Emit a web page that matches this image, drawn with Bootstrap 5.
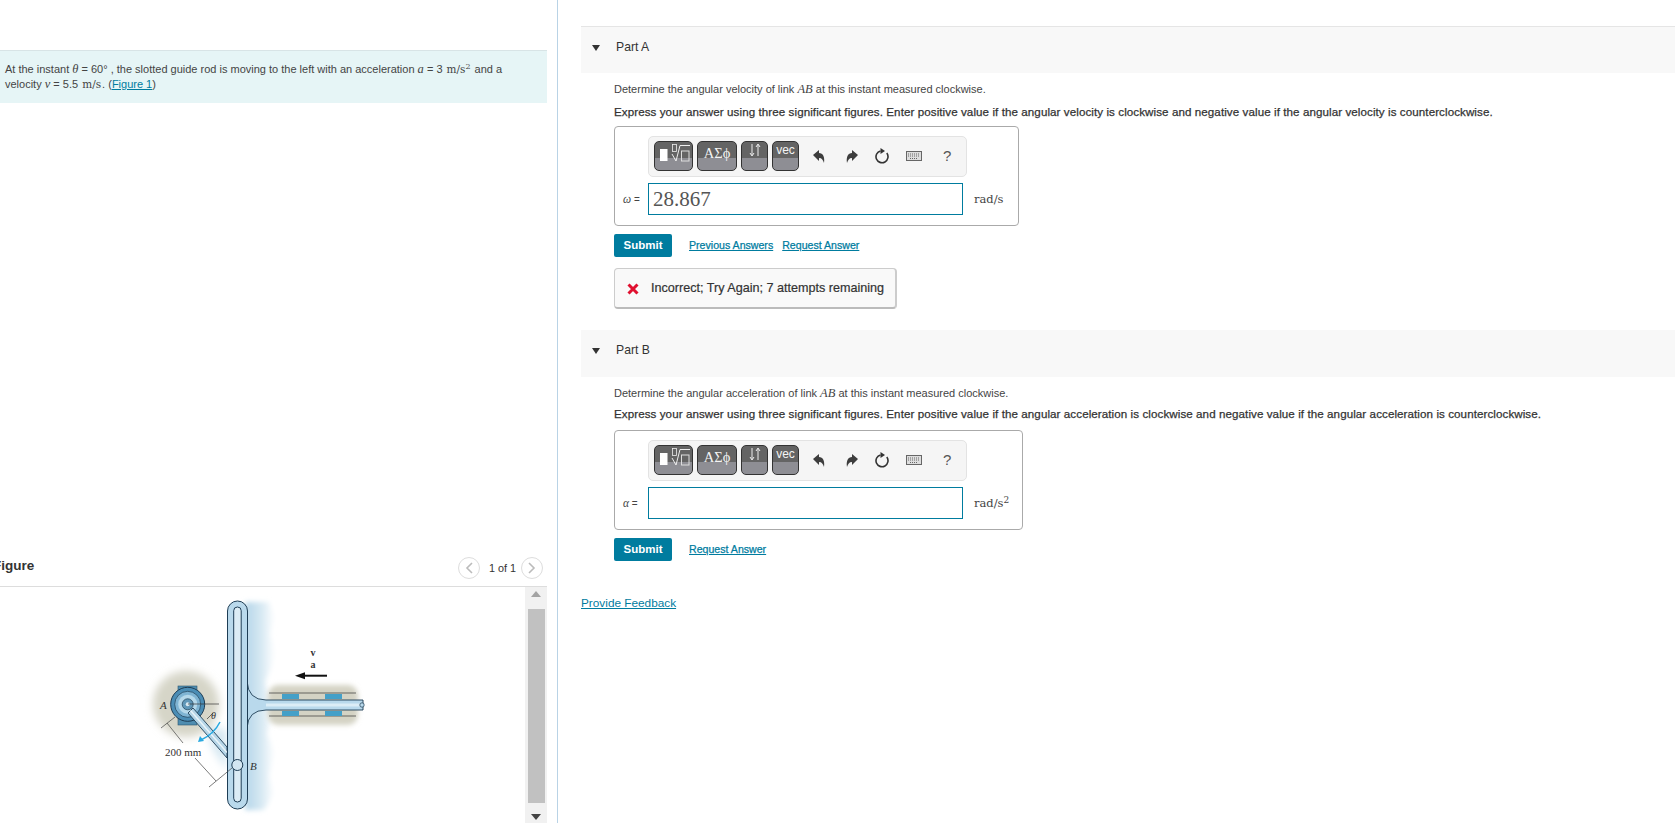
<!DOCTYPE html>
<html lang="en"><head><meta charset="utf-8"><title>Part A</title>
<link href="https://cdn.jsdelivr.net/npm/bootstrap@5.3.0/dist/css/bootstrap.min.css" rel="stylesheet">
<style>
html,body{height:823px;overflow:hidden;background:#fff}
body{font:12px/1.3 "Liberation Sans",Arial,sans-serif;color:#333}
.shell{height:823px;overflow:hidden}
.leftpane{width:558px;flex:none;border-right:1px solid #b9d3e6;overflow:hidden}
.intro{width:547px;margin-top:50px;height:53px;background:#e6f5f6;border-top:1px solid #d8e4e6;padding:11px 5px 0;line-height:15px;font-size:11px;color:#444;white-space:nowrap}
.mvar{font-family:"Liberation Serif",serif;font-style:italic;font-size:12.5px}
.munit{font-family:"DejaVu Serif",serif;font-size:10.5px;margin:0 1px}
.mnum{font-size:8px;vertical-align:4px;line-height:0}
.unit .mnum{font-size:9px}
a.plink{color:#007c9f;text-decoration:underline}
.fighead{width:547px;margin-top:450px;height:34px;border-bottom:1px solid #ddd;align-items:flex-start}
.figttl{font-weight:700;font-size:13.500px;color:#333;margin-left:-7px;line-height:26px}
.pager{gap:9px;padding-right:4px;height:24px;margin-top:3px;font-size:10.8px;color:#333}
.pgcirc{width:22px;height:22px;border:1px solid #ddd;border-radius:50%;display:flex;align-items:center;justify-content:center}
.pgnext{margin-left:-4px}
.figwrap{width:547px;height:237px}
.figsvg{width:525px;height:237px;display:block;flex:none}
.scrolltrack{width:22px;height:237px;flex:none;background:#f1f1f1;align-items:center;justify-content:space-between;padding:4px 0}
.scrollthumb{width:17px;height:194px;background:#c1c1c1}
.rightpane{min-width:0;padding:0 0 0 23px;flex:1}
.parthead{height:47px;background:#f8f8f8;border-top:1px solid #e5e5e5;padding:0 0 5px 11px;gap:16px;font-size:12.2px;color:#333}
.parthead.pb{border-top:0;margin-top:21px}
.pa-head{margin-top:26px}
.partbody{padding-left:33px}
.qline{font-size:11px;color:#444;height:20px;line-height:20px;white-space:nowrap}
.qline.first{margin-top:5px;height:22px;line-height:22px}
.qline.strong{margin-top:2px;color:#333;-webkit-text-stroke:.25px #333;font-size:11.6px;letter-spacing:.08px}
.partb .qline.first{margin-top:6px;height:21px;line-height:21px}
.partb .qline.strong{margin-top:0}
.ansbox{border:1px solid #aaa;border-radius:4px;height:100px;width:405px;margin-top:4px;padding:9px 0 0 33px}
.partb .ansbox{width:409px;margin-top:6px}
.tools{width:319px;height:41px;background:#f5f5f5;border:1px solid #e3e3e3;border-radius:5px;padding:4px 5px;gap:4px;align-items:flex-start}
.tb{height:30px;border:1px solid #333;border-radius:5px;background:linear-gradient(#646464 0,#646464 58%,#8e8e94 58%,#8e8e94 100%);color:#f4f4f4;display:flex;justify-content:center;font-size:12px;line-height:15px;overflow:hidden;padding-top:1px}
.tb1{width:39px;justify-content:flex-start;padding:0}.tb2{width:40px;font:14.500px "Liberation Serif",serif;line-height:22px;padding:0}.tb3{width:27px}.tb4{width:27px}
.toolicons{align-items:center;height:30px;gap:17px;margin-left:10px}
.qm{font-size:15px;color:#555}
.ansrow{margin-top:6px;margin-left:-25px;align-items:center}
.lhs{width:25px;font-size:10px;color:#444;white-space:nowrap}
.lhs i{font-family:"Liberation Serif",serif;font-size:11.5px}
.fieldbox{width:315px;height:32px;border:1px solid #007c9f;font:21px/30px "Liberation Serif",serif;color:#555;padding-left:4px;flex:none}
.unit{font:11.500px "DejaVu Serif",serif;margin-left:11px;color:#444;white-space:nowrap}
.btnsub{width:58px;height:23px;background:#007c9f;color:#fff;font-size:11.5px;font-weight:700;border:0;border-radius:2px;padding:0;line-height:23px}
.btnline{margin-top:8px;align-items:center;gap:17px;font-size:10.6px}
.btnline .gaps{gap:9px;-webkit-text-stroke:.25px #007c9f}
.feedbk{width:283px;height:41px;margin-top:11px;padding-top:1px;background:#f9f9f9;border:1px solid #ccc;border-bottom:2px solid #bbb;border-right:2px solid #ccc;border-radius:4px;padding-left:12px;gap:12px;font-size:12.6px;color:#333;-webkit-text-stroke:.2px #333}
.provide{display:block;margin-top:34px;font-size:11.8px;line-height:16px;width:fit-content}
</style></head><body>
<div class="shell d-flex">
<div class="leftpane">
 <div class="intro">At the instant <span class="mvar">θ</span> = 60° , the slotted guide rod is moving to the left with an acceleration <span class="mvar">a</span> = 3 <span class="munit">m/s<span class="mnum">2</span></span> and a<br>velocity <span class="mvar">v</span> = 5.5 <span class="munit">m/s</span>. (<a class="plink" href="#">Figure 1</a>)</div>
 <div class="fighead d-flex justify-content-between">
  <div class="figttl">Figure</div>
  <div class="pager d-flex align-items-center">
   <span class="pgcirc"><svg width="8" height="12" viewBox="0 0 8 12"><path d="M7 1 2 6l5 5" fill="none" stroke="#bbb" stroke-width="1.6"/></svg></span>
   <span>1 of 1</span>
   <span class="pgcirc pgnext"><svg width="8" height="12" viewBox="0 0 8 12"><path d="M1 1l5 5-5 5" fill="none" stroke="#bbb" stroke-width="1.6"/></svg></span>
  </div>
 </div>
 <div class="figwrap d-flex">
  <svg class="figsvg" viewBox="0 587 525 237" xmlns="http://www.w3.org/2000/svg">
   <defs>
    <filter id="soft" x="-30%" y="-30%" width="160%" height="160%"><feGaussianBlur stdDeviation="4"/></filter>
    <filter id="softer" x="-20%" y="-40%" width="140%" height="180%"><feGaussianBlur stdDeviation="2.500"/></filter>
    <linearGradient id="fade" x1="0" x2="1"><stop offset="0" stop-color="#b5d6ea"/><stop offset=".5" stop-color="#d4e7f2"/><stop offset="1" stop-color="#fff"/></linearGradient>
   </defs>
   <path d="M245 602h24l5 15-4 17 5 18-4 16-6 14 8 30-6 22 7 18-5 24 4 17-6 13-4 4h-18z" fill="url(#fade)" filter="url(#softer)"/>
   <path d="M205 725l22 5v40l-14-20z" fill="#d6e8f2" filter="url(#soft)"/>
   <ellipse cx="186" cy="704" rx="33" ry="33" fill="#d6d5c8" filter="url(#soft)"/>
   <rect x="268" y="685" width="90" height="40" rx="10" fill="#d4d3c4" filter="url(#softer)"/>
   <rect x="178" y="686" width="19" height="39" fill="#4f8db0" stroke="#2b566f" stroke-width=".6"/>
   <circle cx="187.700" cy="704.300" r="17" fill="#4b8db5" stroke="#1e3d55"/>
   <circle cx="187.700" cy="704.300" r="13" fill="#7fb4d3" stroke="#1e3d55" stroke-width=".7"/>
   <circle cx="187.700" cy="704.300" r="9.500" fill="#b5d8ea"/>
   <circle cx="187.700" cy="704.300" r="5.500" fill="#5f97b8" stroke="#1e3d55" stroke-width=".7"/>
   <circle cx="187.700" cy="704.300" r="2" fill="#d7e8f1"/>
   <path d="M193 708l34 39v11l-39-45z" fill="#b6d6e8" stroke="#1e3d55" stroke-width=".9"/>
   <path d="M190.500 710.500l36.500 42" stroke="#eaf4f9" stroke-width="1.500"/>
   <path d="M188 704h31M207 719l6-6" stroke="#333" stroke-width=".7"/>
   <path d="M247 681q1 19 19 19h97v10H266q-18 0-19 18z" fill="#b9d9ec" stroke="#1e3d55" stroke-width=".9"/>
   <path d="M266 705h96" stroke="#dcedf6" stroke-width="3"/>
   <circle cx="362" cy="705" r="2.200" fill="#b9d9ec" stroke="#1e3d55" stroke-width=".7"/>
   <path d="M269 693h87M269 716h87" stroke="#333" stroke-width=".7"/>
   <rect x="282" y="694" width="17" height="5" fill="#44a0c8"/><rect x="325" y="694" width="17" height="5" fill="#44a0c8"/><rect x="282" y="711" width="17" height="5" fill="#44a0c8"/><rect x="325" y="711" width="17" height="5" fill="#44a0c8"/>
   <rect x="227.500" y="601" width="20" height="208" rx="10" fill="#b9d9ec" stroke="#1e3d55"/>
   <rect x="233.700" y="607" width="7.500" height="195" rx="3.700" fill="#dcecf5" stroke="#1e3d55"/>
   <circle cx="237.300" cy="765" r="5.500" fill="#d3e6f1" stroke="#1e3d55"/>
   <path d="M327 675.700h-24" stroke="#111" stroke-width="2"/><path d="M295 675.700l10-3.500v7z" fill="#111"/>
   <path d="M220 722q-6 12-19 18" fill="none" stroke="#29a9e0" stroke-width="1.500"/><path d="M198 742l2-6 4 5z" fill="#29a9e0"/>
   <path d="M161 728l14-11M167 723l16 20M195 758l21 23M209 787l23-19" stroke="#444" stroke-width=".7" fill="none"/>
   <text x="313" y="656" font-family="Liberation Serif" font-weight="700" font-size="10" text-anchor="middle" fill="#333">v</text>
   <text x="313" y="668" font-family="Liberation Serif" font-weight="700" font-size="10" text-anchor="middle" fill="#333">a</text>
   <text x="160" y="709" font-family="Liberation Serif" font-style="italic" font-size="11" fill="#333">A</text>
   <text x="211" y="719" font-family="Liberation Serif" font-style="italic" font-size="10" fill="#333">θ</text>
   <text x="165" y="756" font-family="Liberation Serif" font-size="11" fill="#333">200 mm</text>
   <text x="250" y="770" font-family="Liberation Serif" font-style="italic" font-size="11" fill="#333">B</text>
  </svg>
  <div class="scrolltrack d-flex flex-column">
   <svg width="10" height="6" viewBox="0 0 10 6"><path d="M5 0l5 6H0z" fill="#a3a3a3"/></svg>
   <div class="scrollthumb"></div>
   <svg width="10" height="6" viewBox="0 0 10 6"><path d="M0 0h10L5 6z" fill="#444"/></svg>
  </div>
 </div>
</div>
<div class="rightpane">
 <div class="parthead pa-head d-flex align-items-center"><svg width="8" height="6" viewBox="0 0 8 6"><path d="M0 0h8L4 6z" fill="#333"/></svg><span>Part A</span></div>
 <div class="partbody">
  <div class="qline first">Determine the angular velocity of link <span class="mvar">AB</span> at this instant measured clockwise.</div>
  <div class="qline strong">Express your answer using three significant figures. Enter positive value if the angular velocity is clockwise and negative value if the angular velocity is counterclockwise.</div>
  <div class="ansbox">
   <div class="tools d-flex">
    <div class="tb tb1"><svg width="37" height="28" viewBox="0 0 37 28"><rect x="5" y="7" width="7.500" height="12" fill="#fff"/><path d="M17 12l4 7 4-15.500h10" fill="none" stroke="#eee"/><rect x="17.500" y="2.500" width="4" height="7" fill="none" stroke="#eee" stroke-width=".8"/><rect x="26.500" y="9" width="7.500" height="10" fill="none" stroke="#ddd"/></svg></div>
    <div class="tb tb2">ΑΣϕ</div>
    <div class="tb tb3"><svg width="14" height="16" viewBox="0 0 14 16"><path d="M4 1v11M2 10l2 3 2-3M10 13V2M8 4l2-3 2 3" fill="none" stroke="#eee"/></svg></div>
    <div class="tb tb4">vec</div>
    <div class="toolicons d-flex">
     <svg width="12" height="13" viewBox="0 0 12 13"><path d="M0 5 6 0v3c4 0 6 4 5 10-1-3-2-5-5-5v3z" fill="#3d3d3d"/></svg>
     <svg class="ms-1" width="12" height="13" viewBox="0 0 12 13"><path d="M12 5 6 0v3c-4 0-6 4-5 10 1-3 2-5 5-5v3z" fill="#3d3d3d"/></svg>
     <svg width="14" height="16" viewBox="0 0 14 16"><path d="M11.800 5.100A6 6 0 1 1 5.500 2.900" fill="none" stroke="#333" stroke-width="1.600"/><path d="M5.500 0v6L10 3z" fill="#333"/></svg>
     <svg width="16" height="10" viewBox="0 0 16 10"><rect x=".5" y=".5" width="15" height="9" fill="#ddd" stroke="#666"/><path d="M2 3h12M2 5h12M4 7.500h8" stroke="#666" stroke-dasharray="1 1"/></svg>
     <span class="qm ms-1">?</span>
    </div>
   </div>
   <div class="ansrow d-flex"><span class="lhs"><i>ω</i> =</span><div class="fieldbox">28.867</div><span class="unit">rad/s</span></div>
  </div>
  <div class="btnline d-flex"><button class="btnsub">Submit</button><div class="gaps d-flex"><a class="plink" href="#">Previous Answers</a><a class="plink" href="#">Request Answer</a></div></div>
  <div class="feedbk d-flex align-items-center"><svg width="12" height="12" viewBox="0 0 12 12"><path d="M1.500 1.500l9 9M10.500 1.500l-9 9" stroke="#e0102f" stroke-width="3"/></svg><span>Incorrect; Try Again; 7 attempts remaining</span></div>
 </div>
 <div class="parthead pb d-flex align-items-center"><svg width="8" height="6" viewBox="0 0 8 6"><path d="M0 0h8L4 6z" fill="#333"/></svg><span>Part B</span></div>
 <div class="partbody partb">
  <div class="qline first">Determine the angular acceleration of link <span class="mvar">AB</span> at this instant measured clockwise.</div>
  <div class="qline strong">Express your answer using three significant figures. Enter positive value if the angular acceleration is clockwise and negative value if the angular acceleration is counterclockwise.</div>
  <div class="ansbox">
   <div class="tools d-flex">
    <div class="tb tb1"><svg width="37" height="28" viewBox="0 0 37 28"><rect x="5" y="7" width="7.500" height="12" fill="#fff"/><path d="M17 12l4 7 4-15.500h10" fill="none" stroke="#eee"/><rect x="17.500" y="2.500" width="4" height="7" fill="none" stroke="#eee" stroke-width=".8"/><rect x="26.500" y="9" width="7.500" height="10" fill="none" stroke="#ddd"/></svg></div>
    <div class="tb tb2">ΑΣϕ</div>
    <div class="tb tb3"><svg width="14" height="16" viewBox="0 0 14 16"><path d="M4 1v11M2 10l2 3 2-3M10 13V2M8 4l2-3 2 3" fill="none" stroke="#eee"/></svg></div>
    <div class="tb tb4">vec</div>
    <div class="toolicons d-flex">
     <svg width="12" height="13" viewBox="0 0 12 13"><path d="M0 5 6 0v3c4 0 6 4 5 10-1-3-2-5-5-5v3z" fill="#3d3d3d"/></svg>
     <svg class="ms-1" width="12" height="13" viewBox="0 0 12 13"><path d="M12 5 6 0v3c-4 0-6 4-5 10 1-3 2-5 5-5v3z" fill="#3d3d3d"/></svg>
     <svg width="14" height="16" viewBox="0 0 14 16"><path d="M11.800 5.100A6 6 0 1 1 5.500 2.900" fill="none" stroke="#333" stroke-width="1.600"/><path d="M5.500 0v6L10 3z" fill="#333"/></svg>
     <svg width="16" height="10" viewBox="0 0 16 10"><rect x=".5" y=".5" width="15" height="9" fill="#ddd" stroke="#666"/><path d="M2 3h12M2 5h12M4 7.500h8" stroke="#666" stroke-dasharray="1 1"/></svg>
     <span class="qm ms-1">?</span>
    </div>
   </div>
   <div class="ansrow d-flex"><span class="lhs"><i>α</i> =</span><div class="fieldbox"></div><span class="unit">rad/s<span class="mnum">2</span></span></div>
  </div>
  <div class="btnline d-flex"><button class="btnsub">Submit</button><div class="gaps d-flex"><a class="plink" href="#">Request Answer</a></div></div>
 </div>
 <a class="plink provide" href="#">Provide Feedback</a>
</div>
</div>
<script src="https://cdn.jsdelivr.net/npm/bootstrap@5.3.0/dist/js/bootstrap.bundle.min.js"></script>
</body></html>
